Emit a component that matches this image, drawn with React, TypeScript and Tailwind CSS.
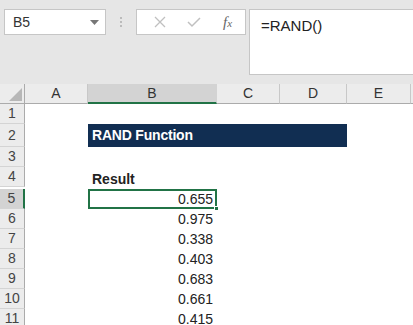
import React from 'react';

const cols = [
  { name: 'A', w: 'w-[63px]' },
  { name: 'B', w: 'w-[129px]' },
  { name: 'C', w: 'w-[63px]' },
  { name: 'D', w: 'w-[67px]' },
  { name: 'E', w: 'w-[64px]' },
];

const values = ['0.655', '0.975', '0.338', '0.403', '0.683', '0.661', '0.415'];

const RowHead: React.FC<{ n: number; active?: boolean; h: string }> = ({ n, active, h }) => (
  <div
    className={`${h} w-[25px] shrink-0 flex items-center justify-center border-b border-[#d4d4d4] text-[14px] text-[#444] ${
      active ? 'bg-[#d3d3d3] border-r-2 border-r-[#217346]' : 'bg-[#ececec] border-r border-r-[#ababab]'
    }`}
  >
    {n}
  </div>
);

export default function App() {
  return (
    <div className="w-[413px] h-[325px] overflow-hidden bg-white font-['Liberation_Sans',sans-serif] text-[#222]">
      {/* Formula bar */}
      <div className="h-[84px] bg-[#e6e6e6] flex items-start pt-[9px] pl-[4px]">
        <div className="w-[102px] h-[26px] bg-white border border-[#c6c6c6] flex items-center justify-between pl-[8px] pr-[6px] text-[14px] text-[#333]">
          <span>B5</span>
          <svg width="9" height="5" viewBox="0 0 9 5">
            <path d="M0 0h9L4.5 5z" fill="#777" />
          </svg>
        </div>
        <div className="w-[30px] h-[26px] flex flex-col items-center justify-center gap-[2px]">
          <span className="w-[2px] h-[2px] bg-[#bbb]" />
          <span className="w-[2px] h-[2px] bg-[#bbb]" />
          <span className="w-[2px] h-[2px] bg-[#bbb]" />
        </div>
        <div className="w-[110px] h-[26px] bg-white border border-[#c6c6c6] flex items-center justify-around pl-[6px] pr-[2px]">
          <svg width="12" height="12" viewBox="0 0 12 12">
            <path d="M1 1l10 10M11 1L1 11" stroke="#c0c0c0" strokeWidth="1.3" />
          </svg>
          <svg width="14" height="12" viewBox="0 0 14 12">
            <path d="M1 6l4 4 8-8" stroke="#c0c0c0" strokeWidth="1.5" fill="none" />
          </svg>
          <span className="font-['Liberation_Serif',serif] italic text-[15px] text-[#666] leading-none">
            f<span className="text-[11px]">x</span>
          </span>
        </div>
        <div className="ml-[3px] flex-1 h-[66px] bg-white border border-[#c6c6c6] border-r-0 pl-[11px] pt-[5px] text-[15px] text-[#222]">
          =RAND()
        </div>
      </div>

      {/* Column headers */}
      <div className="flex h-[20px]">
        <div className="w-[25px] shrink-0 bg-[#ececec] border-r border-b border-[#ababab] flex items-end justify-end pr-[2px] pb-[2px]">
          <svg width="13" height="13" viewBox="0 0 13 13">
            <path d="M13 0V13H0z" fill="#b7b7b7" />
          </svg>
        </div>
        {cols.map(c => (
          <div
            key={c.name}
            className={`${c.w} shrink-0 flex items-center justify-center text-[14px] border-r text-[#333] ${
              c.name === 'B'
                ? 'bg-[#d3d3d3] border-b-2 border-b-[#217346] border-r-[#d3d3d3]'
                : 'bg-[#ececec] border-b border-b-[#ababab] border-r-[#c8c8c8]'
            }`}
          >
            {c.name}
          </div>
        ))}
        <div className="flex-1 bg-[#ececec] border-b border-[#ababab]" />
      </div>

      {/* Rows 1-4 */}
      <div className="flex">
        <RowHead n={1} h="h-[20px]" />
        <div className="flex-1" />
      </div>
      <div className="flex">
        <RowHead n={2} h="h-[23px]" />
        <div className="w-[63px]" />
        <div className="w-[259px] h-[23px] bg-[#112e52] text-white font-bold text-[14px] flex items-center pl-[4px] tracking-[-0.2px]">
          RAND Function
        </div>
      </div>
      <div className="flex">
        <RowHead n={3} h="h-[20px]" />
      </div>
      <div className="flex">
        <RowHead n={4} h="h-[20px]" />
        <div className="w-[63px]" />
        <div className="pl-[4px] pt-[2px] font-bold text-[14px] leading-[20px]">Result</div>
      </div>

      {/* Values */}
      {values.map((v, i) => (
        <div key={v + i} className="flex">
          <RowHead n={i + 5} h="h-[20px]" active={i === 0} />
          <div className={`shrink-0 ${i === 0 ? 'ml-[-1px] w-[64px]' : 'w-[63px]'}`} />
          <div
            className={`relative w-[129px] h-[20px] flex items-center justify-end text-[14px] ${
              i === 0 ? 'border-2 border-[#217346] pr-[2px]' : 'pr-[4px]'
            }`}
          >
            {v}
            {i === 0 && (
              <span className="absolute right-[-4px] bottom-[-4px] w-[5px] h-[5px] bg-[#217346] border border-white" />
            )}
          </div>
        </div>
      ))}
    </div>
  );
}
